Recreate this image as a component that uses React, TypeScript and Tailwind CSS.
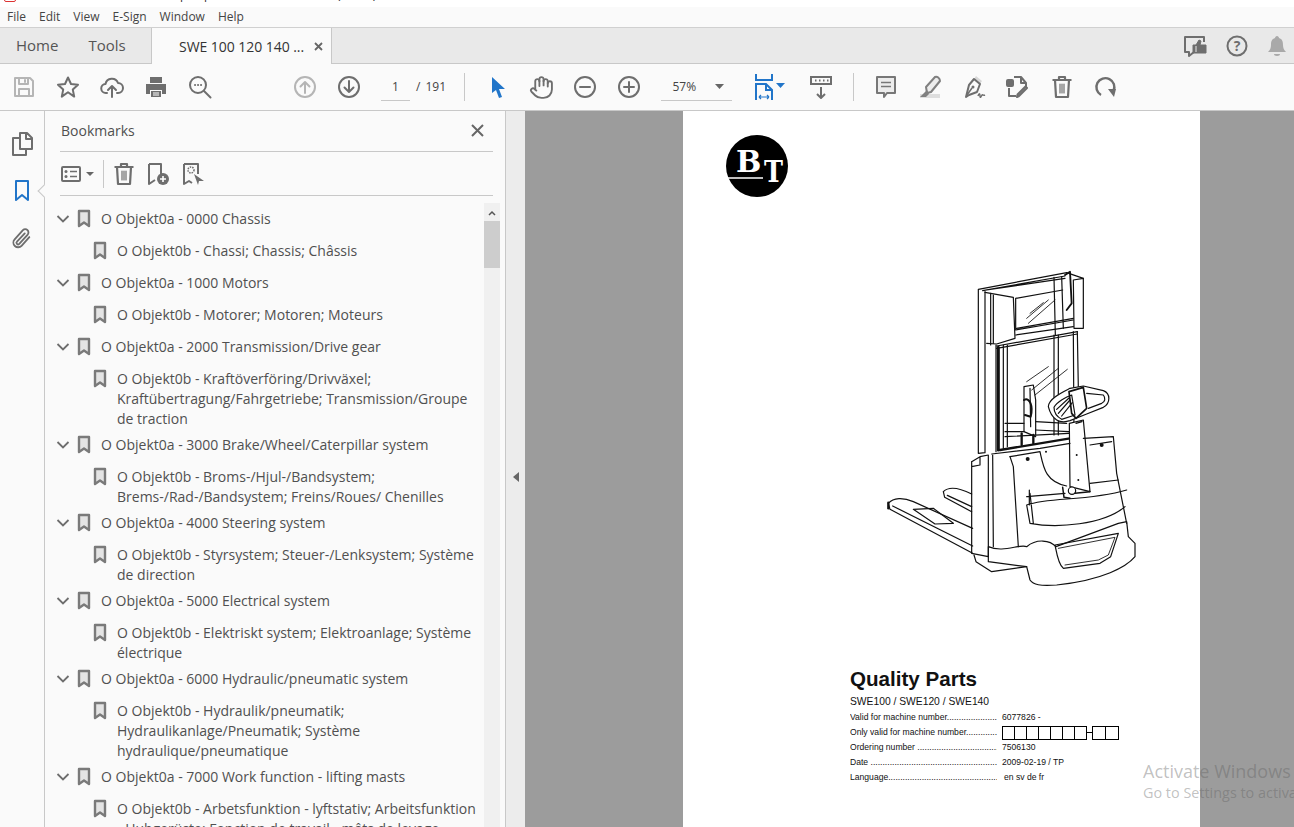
import React from "react";
import { Hand } from "lucide-react";

const menus = ["File", "Edit", "View", "E-Sign", "Window", "Help"];

const tree: { level: number; text: string }[] = [
  { level: 0, text: "O Objekt0a - 0000 Chassis" },
  { level: 1, text: "O Objekt0b - Chassi; Chassis; Châssis" },
  { level: 0, text: "O Objekt0a - 1000 Motors" },
  { level: 1, text: "O Objekt0b - Motorer; Motoren; Moteurs" },
  { level: 0, text: "O Objekt0a - 2000 Transmission/Drive gear" },
  { level: 1, text: "O Objekt0b - Kraftöverföring/Drivväxel; Kraftübertragung/Fahrgetriebe; Transmission/Groupe de traction" },
  { level: 0, text: "O Objekt0a - 3000 Brake/Wheel/Caterpillar system" },
  { level: 1, text: "O Objekt0b - Broms-/Hjul-/Bandsystem; Brems-/Rad-/Bandsystem; Freins/Roues/ Chenilles" },
  { level: 0, text: "O Objekt0a - 4000 Steering system" },
  { level: 1, text: "O Objekt0b - Styrsystem; Steuer-/Lenksystem; Système de direction" },
  { level: 0, text: "O Objekt0a - 5000 Electrical system" },
  { level: 1, text: "O Objekt0b - Elektriskt system; Elektroanlage; Système électrique" },
  { level: 0, text: "O Objekt0a - 6000 Hydraulic/pneumatic system" },
  { level: 1, text: "O Objekt0b - Hydraulik/pneumatik; Hydraulikanlage/Pneumatik; Système hydraulique/pneumatique" },
  { level: 0, text: "O Objekt0a - 7000 Work function - lifting masts" },
  { level: 1, text: "O Objekt0b - Arbetsfunktion - lyftstativ; Arbeitsfunktion - Hubgerüste; Fonction de travail - mâts de levage" },
];

function Ico({ children, size = 24, color = "#6e6e6e", sw = 2 }: { children: React.ReactNode; size?: number; color?: string; sw?: number }) {
  return (
    <svg width={size} height={size} viewBox="0 0 24 24" fill="none" stroke={color} strokeWidth={sw} strokeLinejoin="round" strokeLinecap="round">
      {children}
    </svg>
  );
}

function Btn({ children }: { children: React.ReactNode }) {
  return <div className="w-[44px] h-[46px] flex items-center justify-center shrink-0">{children}</div>;
}

function TrashIcon({ size = 24 }: { size?: number }) {
  return (
    <Ico size={size} sw={2.2}>
      <path d="M2.500 5h19M9 5V2h6v3M5 5l1 17h12l1-17" strokeLinecap="butt" />
      <path d="M10 9v9M14 9v9M12 9v9" strokeWidth="1.200" />
    </Ico>
  );
}

function BookmarkIcon() {
  return (
    <svg width="14" height="20" viewBox="0 0 14 20" className="shrink-0">
      <path d="M2 2h10v15l-5-3.500L2 17z" fill="#e4e4e4" stroke="#7a7a7a" strokeWidth="2.400" strokeLinejoin="round" />
    </svg>
  );
}

function TreeRow({ level, text }: { level: number; text: string }) {
  return (
    <div className={level === 0 ? "flex items-start min-h-[32px] pt-[6px] pl-[11px]" : "flex items-start min-h-[32px] pt-[6px] pl-[48px]"}>
      {level === 0 && (
        <svg width="14" height="20" viewBox="0 0 14 20" className="shrink-0 mr-[7px]">
          <path d="M1.500 7l5.500 5.500L12.500 7" fill="none" stroke="#6e6e6e" strokeWidth="1.800" />
        </svg>
      )}
      <BookmarkIcon />
      <span className="ml-[10px] text-[14px] leading-[20px] text-[#505050] w-[366px]">{text}</span>
    </div>
  );
}

function Forklift() {
  return (
    <svg width="280" height="340" viewBox="0 0 840 1020" fill="none" stroke="#111" strokeWidth="3.600" strokeLinejoin="round" strokeLinecap="round" className="block">
      {/* mast */}
      <path d="M325 88L590 38L640 55M325 88V580L345 578V95M338 92L585 48M350 90L585 55M362 100V255M370 105V250M378 255V575" />
      <path d="M385 262V570" strokeWidth="9" />
      <path d="M400 255V565M412 255V560" />
      <path d="M345 97L430 112L435 235L380 252L350 250" />
      <path d="M437 115L578 90M437 115V210L610 180M440 205L610 175M437 225L610 200M380 258L622 215M380 265L622 222" />
      <path d="M470 175L535 120M475 190L555 120M480 160L520 128" strokeWidth="2.600" />
      <path d="M552 52L556 225M575 50L580 205M610 60L612 205L640 205V55L610 60" />
      <path d="M585 45L600 35L605 130L590 150" strokeWidth="5.500" />
      <path d="M552 225V525M565 225V525M610 215L612 530M622 215L625 385" />
      <path d="M470 365L535 320M485 390L565 325M495 405L592 328" strokeWidth="2.600" />
      <path d="M462 380L490 375L497 420V525M462 380V515L497 530M480 385L482 500" />
      <path d="M462 420C480 410 490 440 482 470L465 465" strokeWidth="6" />
      <path d="M405 490L462 490M497 485L590 490M405 515L462 515M497 510L596 515M405 530L596 520" />
      <path d="M455 520V555M490 525V550" strokeWidth="7" />
      <path d="M390 570L600 535" strokeWidth="7" />
      {/* tiller */}
      <path d="M535 440C535 415 580 395 600 385L640 378L700 392C722 400 722 430 700 442L650 462L600 482C570 492 545 480 535 440Z" fill="#fff" />
      <path d="M552 442C560 425 590 410 605 405L615 465L575 478C560 470 552 460 552 442Z" />
      <path d="M565 460L600 420M575 468L607 428M560 448L597 414M650 400L700 405C708 415 705 425 695 430L655 445" />
      <path d="M597 395L640 382L650 445L618 475L605 460Z" strokeWidth="5" />
      <path d="M598 490L600 680L660 695L640 480L598 490M618 490L636 485" fill="#fff" />
      <circle cx="606" cy="692" r="11" fill="#fff" />
      <path d="M578 682L582 712L600 715M615 700L660 695" strokeWidth="4.500" />
      {/* body */}
      <path d="M365 582L510 565L600 550M640 535L730 530L740 640L770 790M660 555L725 545" />
      <path d="M305 605V880L355 890M305 605L330 590L355 585V890M330 590V615L305 620M368 585L370 860M420 590L430 620L445 860" />
      <path d="M420 590L510 575C520 620 525 665 590 678M660 670L745 660M470 710L585 700M478 690V735" />
      <path d="M470 735C540 710 650 725 770 690M470 735L480 790C560 805 700 795 765 740M480 700L490 790" />
      <path d="M355 860C400 880 450 850 470 860C500 835 540 840 558 860L745 790L770 785L775 830L795 850L795 890C770 920 700 960 560 975C510 978 490 975 480 960L470 920L355 905V860" />
      <path d="M555 855L745 820L722 890L690 910L580 925C565 915 560 880 555 855Z" />
      <path d="M565 865L735 832L715 885L685 900L585 915" strokeWidth="2.600" />
      <path d="M312 885L318 905L365 935L470 920" />
      {/* forks */}
      <path d="M55 730C70 712 100 712 130 725L308 805M55 730L60 748L308 880M68 738L308 858" />
      <path d="M130 748L190 745L250 790L195 792Z" />
      <path d="M220 695C235 680 265 682 305 702M220 695L224 712L305 755M232 706L305 740" />
      <path d="M55 728V745" strokeWidth="7" />
      <g fill="#111" stroke="none">
        <circle cx="473" cy="597" r="6" />
        <circle cx="695" cy="555" r="6" />
        <circle cx="528" cy="575" r="3" />
        <circle cx="620" cy="585" r="3" />
        <circle cx="625" cy="660" r="3" />
      </g>
    </svg>
  );
}

function DocRow({ label, children }: { label: string; children: React.ReactNode }) {
  return (
    <div className="flex h-[15px] items-center text-[8.6px] leading-[15px] text-[#111]">
      <span className="w-[147px] mr-[5px] shrink-0 whitespace-nowrap overflow-hidden">{label}</span>
      {children}
    </div>
  );
}

export default function App() {
  return (
    <div className="relative w-[1294px] h-[827px] overflow-hidden flex flex-col bg-white font-['Open_Sans',sans-serif]">
      {/* title bar, cut off by the screenshot */}
      <div className="h-[7px] bg-white shrink-0 overflow-hidden relative">
        <div className="absolute left-[4px] top-[-10px] w-[12px] h-[12px] border border-[#d33] rounded-[2px]" />
        <div className="absolute left-[180px] top-[-13px] flex text-[12px] leading-[16px] text-[#333] whitespace-nowrap">
          <span className="w-[24px]">p</span>
          <span className="w-[133px]">p</span>
          <span>(32-bit)</span>
        </div>
      </div>

      {/* menu bar */}
      <div className="h-[20px] bg-[#fafafa] flex items-center gap-[13px] pl-[7px] text-[12px] text-[#444] shrink-0 border-b border-[#d0d0d0] box-content">
        {menus.map((m) => (
          <span key={m}>{m}</span>
        ))}
      </div>

      {/* tabs */}
      <div className="h-[36px] bg-[#e9e9e9] flex shrink-0 border-b border-[#c8c8c8]">
        <div className="w-[151px] flex items-center gap-[30px] pl-[16px] text-[15px] text-[#555]">
          <span>Home</span>
          <span>Tools</span>
        </div>
        <div className="w-[181px] h-[36px] bg-[#fafafa] border-x border-[#c8c8c8] flex items-center pl-[27px] text-[14px] text-[#333] whitespace-nowrap">
          <span className="tracking-[-0.05px]">SWE 100 120 140 ...</span>
          <svg width="9" height="9" viewBox="0 0 9 9" className="ml-[10px]">
            <path d="M1 1l7 7M8 1L1 8" stroke="#666" strokeWidth="1.800" />
          </svg>
        </div>
        <div className="flex-1 flex items-center justify-end pr-[8px]">
          <svg width="24" height="24" viewBox="0 0 24 24" fill="none">
            <path d="M21 8V3H2v15h4v4l5-4" stroke="#6e6e6e" strokeWidth="2" strokeLinejoin="round" />
            <path d="M10 11h3l3-5 2 1-1 4h6v8H10z" fill="#6e6e6e" stroke="#6e6e6e" strokeWidth="1" strokeLinejoin="round" />
            <path d="M13 12v6" stroke="#e9e9e9" strokeWidth="1" />
          </svg>
          <svg width="22" height="22" viewBox="0 0 22 22" fill="none" className="ml-[19px]">
            <circle cx="11" cy="11" r="9.500" stroke="#6e6e6e" strokeWidth="2" />
            <text x="11" y="16" textAnchor="middle" fontSize="14" fontWeight="700" fill="#6e6e6e" fontFamily="Open Sans">?</text>
          </svg>
          <svg width="18" height="22" viewBox="0 0 18 22" className="ml-[20px]">
            <path d="M9 1c1 0 2 1 2 2 3 1 4 3 4 7 0 3 1 5 3 7H0c2-2 3-4 3-7 0-4 1-6 4-7 0-1 1-2 2-2zM6 19h6c0 1-1 2-3 2s-3-1-3-2z" fill="#a9a9a9" />
          </svg>
        </div>
      </div>

      {/* main toolbar */}
      <div className="h-[46px] bg-[#fafafa] flex items-center pl-[2px] shrink-0 border-b border-[#c8c8c8] box-content">
        <Btn>
          <Ico color="#b5b5b5">
            <path d="M3 3h15l3 3v15H3zM7 3v6h9V3M13 5v2M7 21v-7h10v7" />
          </Ico>
        </Btn>
        <Btn>
          <Ico>
            <path d="M12 2.500l3 6.500 7 .8-5.200 4.800 1.400 7L12 17.200 5.800 21.600l1.400-7L2 9.800 9 9z" />
          </Ico>
        </Btn>
        <Btn>
          <Ico>
            <path d="M7 18H6a4.500 4.500 0 0 1-.5-9 6.500 6.500 0 0 1 12.500-1 5 5 0 0 1 0 10h-1M12 22V11M8 15l4-4 4 4" />
          </Ico>
        </Btn>
        <Btn>
          <svg width="24" height="24" viewBox="0 0 24 24">
            <path d="M6 2h12v6H6zM2 9h20v10h-4v-4H6v4H2zM7 16h10v6H7z" fill="#6e6e6e" />
            <path d="M9 18h6M9 20h6" stroke="#fff" />
          </svg>
        </Btn>
        <Btn>
          <Ico>
            <circle cx="10" cy="10" r="8" />
            <path d="M16 16l6.500 6.500" />
            <path d="M7 10h.1M10 10h.1M13 10h.1" />
          </Ico>
        </Btn>
        <div className="w-[61px] shrink-0" />
        <Btn>
          <Ico color="#b5b5b5">
            <circle cx="12" cy="12" r="10" />
            <path d="M12 18V7M7.500 11.500L12 7l4.500 4.500" />
          </Ico>
        </Btn>
        <Btn>
          <Ico>
            <circle cx="12" cy="12" r="10" />
            <path d="M12 6v11M7.500 12.500L12 17l4.500-4.500" />
          </Ico>
        </Btn>
        <div className="w-[10px] shrink-0" />
        <div className="w-[29px] h-[28px] border-b border-[#c8c8c8] flex items-center justify-center text-[12px] text-[#444]">1</div>
        <span className="ml-[6px] text-[12px] text-[#444]">/</span>
        <span className="ml-[5px] w-[21px] text-[12px] text-[#444]">191</span>
        <div className="ml-[18px] w-px h-[28px] bg-[#c8c8c8]" />
        <div className="w-[10px] shrink-0" />
        <Btn>
          <svg width="24" height="24" viewBox="0 0 24 24">
            <path d="M7 2l13 12h-6l3 8-3 1-3-8-4 3z" fill="#2175c9" />
          </svg>
        </Btn>
        <Btn>
          <Hand size={25} color="#6e6e6e" strokeWidth={1.800} />
        </Btn>
        <Btn>
          <Ico>
            <circle cx="12" cy="12" r="10" />
            <path d="M7 12h10" />
          </Ico>
        </Btn>
        <Btn>
          <Ico>
            <circle cx="12" cy="12" r="10" />
            <path d="M7 12h10M12 7v10" />
          </Ico>
        </Btn>
        <div className="ml-[10px] w-[71px] h-[28px] border-b border-[#c8c8c8] flex items-center pl-[11px] text-[12px] text-[#444] shrink-0">
          <span>57%</span>
          <svg width="9" height="5" viewBox="0 0 9 5" className="ml-[19px]">
            <path d="M0 0h9L4.500 5z" fill="#666" />
          </svg>
        </div>
        <div className="w-[23px] shrink-0" />
        <div className="w-[36px] flex items-center shrink-0">
          <svg width="18" height="26" viewBox="0 0 18 26" fill="none" stroke="#2175c9" strokeWidth="2">
            <path d="M1 0v6h16V0M1 26V10h10l6 6v10M11 10v6h6" />
            <path d="M4 23h10M4 23l2-2M4 23l2 2M14 23l-2-2M14 23l-2 2" strokeWidth="1.200" />
          </svg>
          <svg width="9" height="5" viewBox="0 0 9 5" className="ml-[3px] mb-[4px]">
            <path d="M0 0h9L4.500 5z" fill="#2175c9" />
          </svg>
        </div>
        <div className="w-[8px] shrink-0" />
        <Btn>
          <svg width="24" height="24" viewBox="0 0 24 24" fill="none" stroke="#6e6e6e" strokeWidth="2">
            <path d="M2 2h20v7H2z" />
            <path d="M6 5.500h1.500M10 5.500h1.500M14 5.500h1.500M18 5.500h1.500M12 12v11M8 19l4 4 4-4" />
          </svg>
        </Btn>
        <div className="ml-[10px] w-px h-[28px] bg-[#c8c8c8]" />
        <div className="w-[10px] shrink-0" />
        <Btn>
          <svg width="24" height="24" viewBox="0 0 24 24">
            <path d="M3 2h18v16H13l-3 4v-4H3z" fill="#ececec" stroke="#777" strokeWidth="2" strokeLinejoin="round" />
            <path d="M7 7.500h10M7 11.500h10" stroke="#777" strokeWidth="1.500" />
          </svg>
        </Btn>
        <Btn>
          <svg width="24" height="24" viewBox="0 0 24 24" fill="none">
            <path d="M2 19h20v4H2z" fill="#dedede" />
            <path d="M8 12L17 2c2-1 5 1 5 4l-9 11-4 1z" fill="#ededed" stroke="#808080" strokeWidth="2" strokeLinejoin="round" />
            <path d="M9 15l-7 7h6l3-3z" fill="#808080" />
          </svg>
        </Btn>
        <Btn>
          <svg width="24" height="24" viewBox="0 0 24 24" fill="none">
            <path d="M14 1l6 5-2 3-6-5z" fill="#d8d8d8" />
            <path d="M12 4l6 5-3 8-8 3-3 2 1-4 2-8z" stroke="#6e6e6e" strokeWidth="2" strokeLinejoin="round" />
            <circle cx="11" cy="12" r="1.500" fill="#6e6e6e" />
            <path d="M5 20l5-7M16 21c1-3 2-3 2 0s1.500 0 2-1 1 1 3 0" stroke="#6e6e6e" strokeWidth="1.500" />
          </svg>
        </Btn>
        <Btn>
          <svg width="24" height="24" viewBox="0 0 24 24" fill="none" stroke="#6e6e6e" strokeWidth="2" strokeLinejoin="round">
            <path d="M8 2h7l5 6v4M15 2v6h5M3 13v8h7" />
            <rect x="1" y="5" width="6" height="6" rx="1" fill="#6e6e6e" />
            <path d="M21 13l-8 8-2 1 .5-2.500 8-8z" />
          </svg>
        </Btn>
        <Btn>
          <TrashIcon />
        </Btn>
        <Btn>
          <svg width="24" height="24" viewBox="0 0 24 24" fill="none">
            <path d="M7 20A9 9 0 1 1 19.500 16" stroke="#6e6e6e" strokeWidth="2.400" />
            <path d="M14 14l8 0-2 8z" fill="#6e6e6e" />
          </svg>
        </Btn>
      </div>

      {/* work area */}
      <div className="flex-1 min-h-0 flex">
        {/* icon rail */}
        <div className="w-[45px] shrink-0 bg-[#fafafa] border-r border-[#c8c8c8] relative flex flex-col items-center pt-[21px] gap-[24px]">
          <svg width="22" height="24" viewBox="0 0 22 24" fill="none" stroke="#6e6e6e" strokeWidth="2" strokeLinejoin="round">
            <path d="M9 1h7l5 5v11H9zM15 1v6h6M9 6H2v17h13v-6" />
          </svg>
          <svg width="16" height="22" viewBox="0 0 16 22" fill="none">
            <path d="M2 1h12v19l-6-5-6 5z" stroke="#2175c9" strokeWidth="2" strokeLinejoin="round" />
          </svg>
          <svg width="22" height="24" viewBox="0 0 24 24" fill="none" stroke="#6e6e6e" strokeWidth="2" strokeLinecap="round" strokeLinejoin="round">
            <path d="M20 11l-8.500 9.500a5 5 0 0 1-7.500-7L13 3.500a3.500 3.500 0 0 1 5 5l-9 10a1.700 1.700 0 0 1-2.500-2.500L15 7" />
          </svg>
          <div className="absolute right-[-1px] top-[73px] w-[8px] h-[14px] overflow-hidden">
            <div className="w-[12px] h-[12px] bg-[#fafafa] border-l border-b border-[#c8c8c8] rotate-45 translate-x-[3px] translate-y-px" />
          </div>
        </div>

        {/* bookmarks panel */}
        <div className="w-[461px] shrink-0 bg-[#fafafa] flex flex-col min-h-0 border-r border-[#c8c8c8]">
          <div className="h-[41px] pb-[2px] ml-[15px] mr-[12px] flex items-center justify-between border-b border-[#c8c8c8] shrink-0">
            <span className="pl-px text-[14px] text-[#505050]">Bookmarks</span>
            <svg width="13" height="13" viewBox="0 0 13 13" className="mr-[9px]">
              <path d="M1 1l11 11M12 1L1 12" stroke="#666" strokeWidth="2" />
            </svg>
          </div>
          <div className="h-[44px] ml-[15px] mr-[12px] flex items-center border-b border-[#c8c8c8] shrink-0">
            <svg width="20" height="16" viewBox="0 0 20 16" fill="none" className="ml-px">
              <rect x="1" y="1" width="18" height="14" rx="1" stroke="#6e6e6e" strokeWidth="2" />
              <circle cx="5" cy="5.500" r="1.500" fill="#6e6e6e" />
              <circle cx="5" cy="10.500" r="1.500" fill="#6e6e6e" />
              <path d="M9 5.500h7M9 10.500h7" stroke="#6e6e6e" strokeWidth="1.600" />
            </svg>
            <svg width="8" height="4" viewBox="0 0 8 4" className="ml-[5px]">
              <path d="M0 0h8L4 4z" fill="#666" />
            </svg>
            <div className="ml-[9px] w-px h-[28px] bg-[#c8c8c8]" />
            <div className="ml-[8px]">
              <TrashIcon />
            </div>
            <svg width="24" height="24" viewBox="0 0 24 24" fill="none" className="ml-[10px]">
              <path d="M3 2h12v12M3 2v20l6-4" stroke="#6e6e6e" strokeWidth="2" strokeLinejoin="round" />
              <circle cx="17" cy="17" r="6" fill="#6e6e6e" />
              <path d="M17 14v6M14 17h6" stroke="#fff" strokeWidth="1.600" />
            </svg>
            <svg width="24" height="24" viewBox="0 0 24 24" fill="none" className="ml-[11px]">
              <path d="M3 2h14v10M3 2v20l5-3 3 2" stroke="#6e6e6e" strokeWidth="2" strokeLinejoin="round" />
              <circle cx="10" cy="8" r="3" stroke="#6e6e6e" strokeWidth="1.500" strokeDasharray="1.500 1" />
              <path d="M13 12l10 7-5 0-1 4z" fill="#6e6e6e" />
            </svg>
          </div>
          <div className="flex-1 min-h-0 flex overflow-hidden pt-[7px]">
            <div className="flex-1 min-w-0 h-[640px]">
              {tree.map((r, i) => (
                <TreeRow key={i} level={r.level} text={r.text} />
              ))}
            </div>
            <div className="w-[16px] mr-[5px] pt-[2px] bg-[#f0f0f0] flex flex-col items-center shrink-0">
              <svg width="8" height="16" viewBox="0 0 8 16">
                <path d="M1 10l3-3 3 3" fill="none" stroke="#555" strokeWidth="1.500" />
              </svg>
              <div className="w-full h-[47px] bg-[#cdcdcd]" />
            </div>
          </div>
        </div>

        {/* splitter */}
        <div className="w-[19px] shrink-0 bg-[#ececec] flex items-center justify-center">
          <svg width="6" height="10" viewBox="0 0 6 10" className="mt-[16px]">
            <path d="M6 0v10L0 5z" fill="#666" />
          </svg>
        </div>

        {/* document canvas */}
        <div className="flex-1 min-w-0 bg-[#9c9c9c] pl-[158px] overflow-hidden">
          <div className="w-[517px] h-[716px] bg-white flex flex-col">
            <svg width="66" height="66" viewBox="0 0 66 66" className="ml-[41px] mt-[23px] shrink-0">
              <circle cx="33" cy="32" r="31" fill="#000" />
              <text x="12" y="38" fill="#fff" fontFamily="DejaVu Serif" fontWeight="700" fontSize="30">B</text>
              <text x="40" y="48" fill="#fff" fontFamily="DejaVu Serif" fontWeight="700" fontSize="30" textLength="19" lengthAdjust="spacingAndGlyphs">T</text>
              <path d="M4 44h35" stroke="#fff" strokeWidth="1.500" />
            </svg>
            <div className="ml-[187px] mt-[60px] shrink-0">
              <Forklift />
            </div>
            <div className="ml-[167px] mt-[67px] font-['Liberation_Sans',sans-serif]">
              <div className="text-[20.6px] leading-[24px] font-bold text-[#111]">Quality Parts</div>
              <div className="mt-[4px] mb-[2px] text-[10.3px] leading-[13px] text-[#111]">SWE100 / SWE120 / SWE140</div>
              <DocRow label="Valid for machine number.......................................">
                <span>6077826 -</span>
              </DocRow>
              <DocRow label="Only valid for machine number...................................">
                <div className="flex items-center">
                  {[0, 1, 2, 3, 4, 5, 6].map((i) => (
                    <div key={i} className="w-[13px] h-[14px] border border-black -ml-px first:ml-0" />
                  ))}
                  <div className="w-[6px] h-px bg-black" />
                  {[0, 1].map((i) => (
                    <div key={i} className="w-[14px] h-[14px] border border-black -ml-px first:ml-0" />
                  ))}
                </div>
              </DocRow>
              <DocRow label="Ordering number ...................................................">
                <span>7506130</span>
              </DocRow>
              <DocRow label="Date ..................................................................................">
                <span>2009-02-19 / TP</span>
              </DocRow>
              <DocRow label="Language...........................................................................">
                <span className="pl-[2px]">en sv de fr</span>
              </DocRow>
            </div>
          </div>
        </div>
      </div>

      {/* windows activation watermark */}
      <div className="absolute left-[1143px] top-[759px] whitespace-nowrap text-[#5f5f5f]/40 pointer-events-none">
        <div className="text-[18px] leading-[24px]">Activate Windows</div>
        <div className="text-[14.4px] leading-[20px]">Go to Settings to activate Windows.</div>
      </div>
    </div>
  );
}
